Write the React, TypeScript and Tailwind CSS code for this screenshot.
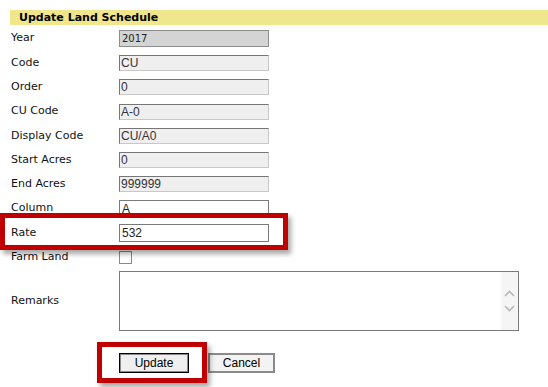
import React from "react";

type Row = { label: string; value?: string; kind: "year" | "ro" | "edit" | "check" };

const rows: Row[] = [
  { label: "Year", value: "2017", kind: "year" },
  { label: "Code", value: "CU", kind: "ro" },
  { label: "Order", value: "0", kind: "ro" },
  { label: "CU Code", value: "A-0", kind: "ro" },
  { label: "Display Code", value: "CU/A0", kind: "ro" },
  { label: "Start Acres", value: "0", kind: "ro" },
  { label: "End Acres", value: "999999", kind: "ro" },
  { label: "Column", value: "A", kind: "edit" },
  { label: "Rate", value: "532", kind: "edit" },
  { label: "Farm Land", kind: "check" },
];

function Field({ row }: { row: Row }) {
  if (row.kind === "check") {
    return <div className="h-[13px] w-[13px] border border-[#8a8a8a] bg-white" />;
  }
  if (row.kind === "year") {
    return (
      <div className="flex h-[17px] w-[150px] items-center border border-[#8d8d8d] bg-[#d4d4d4] pl-[2px] font-['DejaVu_Sans',sans-serif] text-[10px] text-[#222]">
        {row.value}
      </div>
    );
  }
  if (row.kind === "ro") {
    return (
      <div className="flex h-[16px] w-[150px] items-center border border-t-[#767676] border-l-[#767676] border-r-[#c8c8c8] border-b-[#c8c8c8] bg-[#efefef] pl-[1px] font-['Liberation_Sans',Arial,sans-serif] text-[12px] text-[#333]">
        {row.value}
      </div>
    );
  }
  return (
    <div className="flex h-[18px] w-[150px] items-center border border-[#7a7a7a] bg-white pl-[2px] font-['Liberation_Sans',Arial,sans-serif] text-[12px] text-[#222]">
      {row.value}
    </div>
  );
}

export default function App() {
  return (
    <div className="relative h-[387px] w-[548px] overflow-hidden bg-white font-['DejaVu_Sans',Verdana,sans-serif] text-[11px] text-[#111]">
      <div className="ml-[10px] mt-[10px] h-[15px] bg-[#f0e68c] pl-[9px] text-[11px] font-bold leading-[15px] text-black">
        Update Land Schedule
      </div>

      <div className="flex flex-col pt-[1.5px]">
        {rows.map((row) => (
          <div key={row.label} className="flex h-[24.3px] items-center">
            <span className="w-[119px] pl-[11px]">{row.label}</span>
            <Field row={row} />
          </div>
        ))}
      </div>

      <div className="mt-[2px] flex items-center">
        <span className="w-[119px] pl-[11px]">Remarks</span>
        <div className="flex h-[60px] w-[400px] border border-[#7a7a7a] bg-white">
          <div className="flex-1" />
          <div className="flex w-[17px] flex-col items-center justify-center gap-[8px] bg-[#f5f5f5] text-[#b8b8b8]">
            <svg width="11" height="7" viewBox="0 0 11 7" fill="none" stroke="currentColor" strokeWidth="1.6">
              <path d="M1 6L5.5 1.5L10 6" />
            </svg>
            <svg width="11" height="7" viewBox="0 0 11 7" fill="none" stroke="currentColor" strokeWidth="1.6">
              <path d="M1 1L5.5 5.5L10 1" />
            </svg>
          </div>
        </div>
      </div>

      <div className="mt-[22px] flex gap-[19px] pl-[119px] font-['Liberation_Sans',Arial,sans-serif] text-[12px] text-black">
        <button className="flex h-[20px] w-[70px] items-center justify-center border border-black bg-[#efefef] shadow-[inset_0_0_0_1px_#8a8a8a]">
          Update
        </button>
        <button className="flex h-[20px] w-[67px] items-center justify-center border-2 border-[#8a8a8a] bg-[#f3f3f3]">
          Cancel
        </button>
      </div>

      {/* annotation highlights */}
      <div className="absolute left-0 top-[213px] h-[37px] w-[288px] border-[5px] border-[#c00000] shadow-[3px_4px_5px_rgba(0,0,0,0.35)]" />
      <div className="absolute left-[97px] top-[342px] h-[41px] w-[110px] border-[5px] border-[#c00000] shadow-[3px_4px_5px_rgba(0,0,0,0.35)]" />
    </div>
  );
}
